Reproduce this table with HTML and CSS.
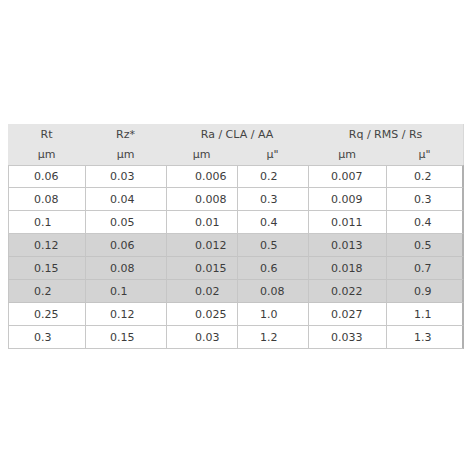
FILE: index.html
```html
<!DOCTYPE html>
<html>
<head>
<meta charset="utf-8">
<link rel="stylesheet" href="styles.css">
</head>
<body>
<table class="rough">
  <colgroup>
    <col class="c1"><col class="c2"><col class="c3"><col class="c4"><col class="c5"><col class="c6">
  </colgroup>
  <thead>
    <tr class="h1">
      <th>Rt</th><th>Rz*</th><th colspan="2">Ra / CLA / AA</th><th colspan="2">Rq / RMS / Rs</th>
    </tr>
    <tr class="h2">
      <th>µm</th><th>µm</th><th>µm</th><th>µ"</th><th>µm</th><th>µ"</th>
    </tr>
  </thead>
  <tbody>
    <tr class="first"><td>0.06</td><td>0.03</td><td>0.006</td><td>0.2</td><td>0.007</td><td>0.2</td></tr>
    <tr><td>0.08</td><td>0.04</td><td>0.008</td><td>0.3</td><td>0.009</td><td>0.3</td></tr>
    <tr><td>0.1</td><td>0.05</td><td>0.01</td><td>0.4</td><td>0.011</td><td>0.4</td></tr>
    <tr class="hl"><td>0.12</td><td>0.06</td><td>0.012</td><td>0.5</td><td>0.013</td><td>0.5</td></tr>
    <tr class="hl"><td>0.15</td><td>0.08</td><td>0.015</td><td>0.6</td><td>0.018</td><td>0.7</td></tr>
    <tr class="hl"><td>0.2</td><td>0.1</td><td>0.02</td><td>0.08</td><td>0.022</td><td>0.9</td></tr>
    <tr><td>0.25</td><td>0.12</td><td>0.025</td><td>1.0</td><td>0.027</td><td>1.1</td></tr>
    <tr><td>0.3</td><td>0.15</td><td>0.03</td><td>1.2</td><td>0.033</td><td>1.3</td></tr>
  </tbody>
</table>
</body>
</html>
```
FILE: styles.css
```css
html, body {
  margin: 0;
  background: #ffffff;
}
body {
  font-family: "DejaVu Sans", Verdana, sans-serif;
  font-size: 11px;
  color: #3c3c3c;
}
.rough {
  margin: 124px 0 0 8px;
  width: 456px;
  border-collapse: separate;
  border-spacing: 0;
  table-layout: fixed;
}
.c1 { width: 77px; }
.c2 { width: 81px; }
.c3 { width: 71px; }
.c4 { width: 71px; }
.c5 { width: 78px; }
.c6 { width: 78px; }

.rough th {
  background: #e6e6e6;
  font-weight: normal;
  padding: 0;
  text-align: center;
  color: #444;
}
.rough th:last-child {
  border-right: 1px solid #d8d8d8;
}
.h1 th { height: 20px; }
.h2 th { height: 21px; }

.rough td {
  height: 22px;
  padding: 0;
  text-align: left;
  border-left: 1px solid #c8c8c8;
  border-bottom: 1px solid #c8c8c8;
  background: #ffffff;
}
.rough td:last-child {
  border-right: 2px solid #b0b0b0;
}
.rough .first td {
  border-top: 1px solid #c8c8c8;
  height: 21px;
}
.rough .hl td {
  background: #d3d3d3;
  border-left-color: #c6c6c6;
  border-bottom-color: #c4c4c4;
}
.rough td:nth-child(1) { padding-left: 25px; }
.rough td:nth-child(2) { padding-left: 24px; }
.rough td:nth-child(3) { padding-left: 28px; }
.rough td:nth-child(4) { padding-left: 22px; }
.rough td:nth-child(5) { padding-left: 22px; }
.rough td:nth-child(6) { padding-left: 27px; }
```
